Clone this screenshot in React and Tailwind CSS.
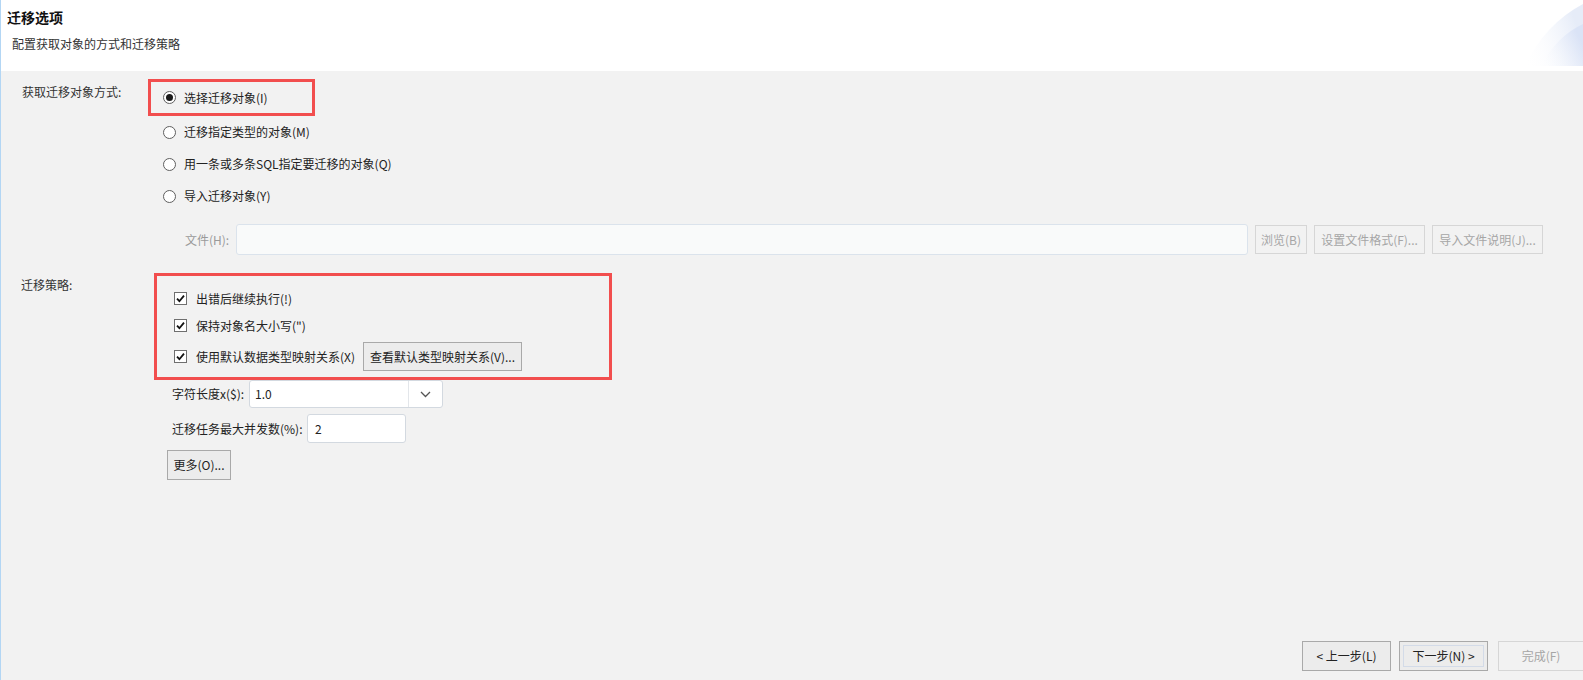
import React from 'react';

const Radio = ({ checked }) => (
    <span className="w-[13px] h-[13px] rounded-full border border-[#5f5f5f] bg-white flex items-center justify-center shrink-0">
        {checked && <span className="w-[7px] h-[7px] rounded-full bg-[#1a1a1a]" />}
    </span>
);

const Check = () => (
    <span className="w-[13px] h-[13px] border border-[#6f6f6f] bg-white flex items-center justify-center shrink-0">
        <svg width="11" height="11" viewBox="0 0 11 11">
            <path d="M2 5.6 L4.4 8.2 L9 2.6" fill="none" stroke="#111" strokeWidth="1.8" />
        </svg>
    </span>
);

const Btn = ({ className = '', disabled, children }) => (
    <div
        className={`flex items-center justify-center border shrink-0 ${disabled ? 'border-[#d6d6d6] text-[#a6a6a6] bg-[#f2f2f2]' : 'border-[#a9a9a9] bg-[#ececec] text-[#222]'} ${className}`}
    >
        {children}
    </div>
);

const App = () => {
    const options = ['迁移指定类型的对象(M)', '用一条或多条SQL指定要迁移的对象(Q)', '导入迁移对象(Y)'];
    const checks = ['出错后继续执行(!)', '保持对象名大小写(")'];

    return (
        <div className="w-[1583px] h-[680px] overflow-hidden flex flex-col border-l border-[#b3d6f4] text-[12px] leading-[16px] text-[#222] font-['Noto_Sans_CJK_SC','Noto_Sans',sans-serif]">
            {/* Header */}
            <div className="h-[71px] bg-white relative flex flex-col shrink-0">
                <div className="pl-[6px] pt-[7px] text-[14px] leading-[20px] font-bold text-[#111]">迁移选项</div>
                <div className="pl-[11px] mt-[9px] text-[#333]">配置获取对象的方式和迁移策略</div>
                <svg className="absolute right-0 top-0" width="60" height="68" viewBox="0 0 60 68">
                    <defs>
                        <linearGradient id="g1" x1="0" y1="1" x2="1" y2="0.6">
                            <stop offset="0" stopColor="#ffffff" stopOpacity="0" />
                            <stop offset="1" stopColor="#e6ecf8" />
                        </linearGradient>
                        <linearGradient id="g2" x1="0" y1="1" x2="1" y2="0.5">
                            <stop offset="0" stopColor="#ffffff" stopOpacity="0" />
                            <stop offset="1" stopColor="#dae3f6" />
                        </linearGradient>
                    </defs>
                    <path d="M2 66 Q22 24 60 4 L60 66 Z" fill="url(#g1)" />
                    <path d="M18 66 Q34 36 60 24 L60 66 Z" fill="url(#g2)" />
                </svg>
            </div>

            {/* Body */}
            <div className="flex-1 bg-[#f2f2f2] flex flex-col">
                {/* Object source */}
                <div className="flex mt-[8px]">
                    <div className="w-[147px] pl-[21px] pt-[5px] shrink-0 text-[#333]">获取迁移对象方式:</div>
                    <div className="flex-1 flex flex-col pr-[40px]">
                        <div className="w-[167px] h-[37px] border-[3px] border-[#f24e4e] flex items-center pl-[12px] gap-[8px]">
                            <Radio checked />
                            <span>选择迁移对象(I)</span>
                        </div>
                        {options.map((o) => (
                            <div key={o} className="h-[32px] flex items-center pl-[15px] gap-[8px]">
                                <Radio />
                                <span>{o}</span>
                            </div>
                        ))}
                        <div className="mt-[12px] flex items-center h-[31px] pl-[37px]">
                            <span className="text-[#9a9a9a] w-[51px] shrink-0">文件(H):</span>
                            <div className="flex-1 h-[31px] rounded-[3px] border border-[#dbe3ec] bg-[#f9fafa]" />
                            <Btn disabled className="ml-[7px] w-[52px] h-[29px]">浏览(B)</Btn>
                            <Btn disabled className="ml-[7px] w-[111px] h-[29px]">设置文件格式(F)...</Btn>
                            <Btn disabled className="ml-[7px] w-[111px] h-[29px]">导入文件说明(J)...</Btn>
                        </div>
                    </div>
                </div>

                {/* Strategy */}
                <div className="flex mt-[18px]">
                    <div className="w-[147px] pl-[20px] pt-[4px] shrink-0 text-[#333]">迁移策略:</div>
                    <div className="ml-[6px] w-[458px] h-[107px] border-[3px] border-[#f24e4e] flex flex-col pl-[17px] pt-[9px]">
                        {checks.map((c) => (
                            <div key={c} className="h-[27px] flex items-center gap-[9px]">
                                <Check />
                                <span>{c}</span>
                            </div>
                        ))}
                        <div className="mt-[3px] h-[29px] flex items-center">
                            <Check />
                            <span className="ml-[9px]">使用默认数据类型映射关系(X)</span>
                            <Btn className="ml-[8px] w-[159px] h-[29px] bg-[#e9e9e9] border-[#a3a3a3]">查看默认类型映射关系(V)...</Btn>
                        </div>
                    </div>
                </div>

                <div className="flex flex-col pl-[166px]">
                    <div className="h-[28px] flex items-center">
                        <span className="ml-[5px] w-[77px] shrink-0">字符长度x($):</span>
                        <div className="w-[194px] h-[28px] bg-white border border-[#d3d9e0] rounded-[3px] flex items-center">
                            <span className="flex-1 pl-[5px]">1.0</span>
                            <div className="w-[34px] h-full border-l border-[#e3e6ea] flex items-center justify-center">
                                <svg width="11" height="7" viewBox="0 0 11 7">
                                    <path d="M1 1 L5.5 5.5 L10 1" fill="none" stroke="#555" strokeWidth="1.3" />
                                </svg>
                            </div>
                        </div>
                    </div>
                    <div className="mt-[6px] h-[29px] flex items-center">
                        <span className="ml-[5px] w-[135px] shrink-0">迁移任务最大并发数(%):</span>
                        <div className="w-[99px] h-[29px] bg-white border border-[#d3d9e0] rounded-[3px] flex items-center pl-[7px]">2</div>
                    </div>
                    <Btn className="mt-[7px] w-[64px] h-[30px]">更多(O)...</Btn>
                </div>

                {/* Footer buttons */}
                <div className="mt-auto mb-[9px] flex justify-end items-center">
                    <Btn className="w-[89px] h-[30px]">&lt; 上一步(L)</Btn>
                    <div className="ml-[8px] w-[89px] h-[30px] border border-[#a9a9a9] bg-[#ececec] p-[3px] flex">
                        <div className="flex-1 border border-[#d3dbe8] flex items-center justify-center">下一步(N) &gt;</div>
                    </div>
                    <Btn disabled className="ml-[10px] w-[85px] h-[30px] border-r-0">完成(F)</Btn>
                </div>
            </div>
        </div>
    );
};

export default App;
